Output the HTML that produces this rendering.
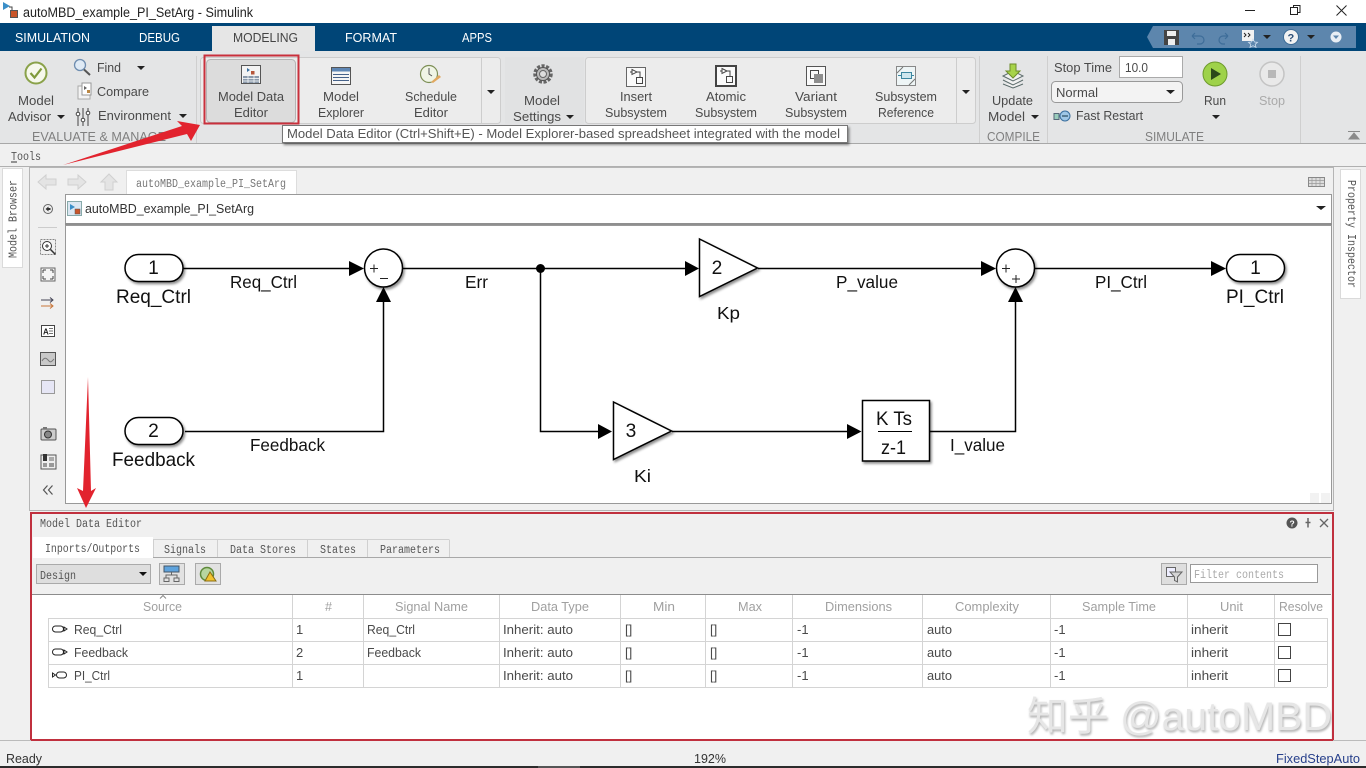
<!DOCTYPE html>
<html><head><meta charset="utf-8"><title>autoMBD_example_PI_SetArg - Simulink</title>
<style>
html,body{margin:0;padding:0;width:1366px;height:768px;overflow:hidden;background:#f0f0f0}
svg{display:block;position:absolute;left:0;top:0}
text{font-family:"Liberation Sans","Noto Sans CJK SC",sans-serif;font-size:13px;fill:#444;white-space:pre}
.m{font-family:"Liberation Mono",monospace;font-size:11.5px;fill:#555}
.r{fill:#4a4a4a;font-size:13px}
.g{fill:#7f7f7f;font-size:13px}
.t{fill:#fff;font-size:13px}
.h{fill:#a0a0a0;font-size:13px}
.c{fill:#4a4a4a;font-size:13px}
.d{fill:#111;font-size:17.300px}
.b{fill:#111;font-size:19.200px}
.ln{stroke:#000;stroke-width:1.5;fill:none}
.bk{fill:#fff;stroke:#000;stroke-width:1.5;filter:url(#s)}
.grid{stroke:#d4d4d4;stroke-width:1;fill:none}
</style></head><body>
<svg width="1366" height="768" viewBox="0 0 1366 768" xmlns="http://www.w3.org/2000/svg">
<defs><filter id="s" x="-20%" y="-20%" width="150%" height="150%"><feDropShadow dx="1.5" dy="2" stdDeviation="1.2" flood-color="#000" flood-opacity=".45"/></filter>
<filter id="w" x="-5%" y="-5%" width="110%" height="115%"><feDropShadow dx="1" dy="2" stdDeviation="1" flood-color="#aaa" flood-opacity=".9"/></filter></defs>

<!-- title bar -->
<rect width="1366" height="23" fill="#fff"/>
<path d="M3 2l7 4-7 4z" fill="#3a8fc8"/><path d="M9 7h3v3" fill="none" stroke="#444"/><rect x="10.500" y="10.500" width="7" height="7" fill="#c9552a" stroke="#555"/>
<text x="23" y="17" style="fill:#222;font-size:13.500px" textLength="230" lengthAdjust="spacingAndGlyphs">autoMBD_example_PI_SetArg - Simulink</text>
<path d="M1245 10.500h10" stroke="#222"/><path d="M1293.500 7.500V5.500h6.500v7h-2.500" fill="none" stroke="#222"/><rect x="1290.500" y="7.500" width="7" height="7" fill="none" stroke="#222"/>
<path d="M1336.500 5.500l10 10M1346.500 5.500l-10 10" stroke="#222"/>

<!-- blue tab strip -->
<rect y="23" width="1366" height="28" fill="#004577"/>
<rect x="212" y="26" width="103" height="25" fill="#e6e6e6"/>
<text x="15" y="42" class="t" textLength="75" lengthAdjust="spacingAndGlyphs">SIMULATION</text>
<text x="139" y="42" class="t" textLength="41" lengthAdjust="spacingAndGlyphs">DEBUG</text>
<text x="233" y="42" class="t" style="fill:#444" textLength="65" lengthAdjust="spacingAndGlyphs">MODELING</text>
<text x="345" y="42" class="t" textLength="52" lengthAdjust="spacingAndGlyphs">FORMAT</text>
<text x="462" y="42" class="t" textLength="30" lengthAdjust="spacingAndGlyphs">APPS</text>
<!-- quick access -->
<path d="M1153 26H1356V48H1153L1147 37z" fill="#5d86ad"/>
<rect x="1164" y="30" width="15" height="15" fill="#444"/><rect x="1167" y="31" width="9" height="5" fill="#eee"/><rect x="1168" y="39" width="7" height="6" fill="#eee"/>
<path d="M1192 36h8a4 4 0 0 1 0 8h-3M1192 36l3-3M1192 36l3 3" fill="none" stroke="#3e6d99" stroke-width="1.200"/>
<path d="M1228 36h-5a4 4 0 0 0 0 8h2M1228 36l-3-3M1228 36l-3 3" fill="none" stroke="#3e6d99" stroke-width="1.200"/>
<rect x="1242" y="30" width="12" height="11" fill="#f2f2f2"/><path d="M1244 33l2 2-2 2M1248 33l2 2-2 2" fill="none" stroke="#222"/><path d="M1253 39l1.500 3 3 .3-2.300 2 .8 3-3-1.600-3 1.600.8-3-2.300-2 3-.3z" fill="none" stroke="#cde" stroke-width=".8"/>
<path d="M1263 35h8l-4 4z" fill="#222"/>
<circle cx="1291" cy="37" r="7.500" fill="#f2f2f2" stroke="#3c6b96"/><text x="1287.500" y="41.500" style="font-size:11px;font-weight:bold;fill:#2c4f78">?</text>
<path d="M1307 35h8l-4 4z" fill="#222"/>
<circle cx="1336" cy="37" r="5.500" fill="#e8eef4"/><path d="M1333 35.500h6l-3 3.500z" fill="#5d86ad"/>

<!-- ribbon -->
<rect y="51" width="1366" height="92" fill="#e4e5e6"/>
<rect y="143" width="1366" height="1" fill="#a8a8a8"/>
<rect y="144" width="1366" height="22" fill="#f0f0f0"/>
<rect y="166" width="1366" height="1" fill="#b0b0b0"/>
<path d="M196.500 56V143M979.500 56V143M1047.500 56V143M1300.500 56V143" stroke="#cfcfcf"/>
<rect x="200.500" y="57.500" width="300" height="66" rx="3" fill="#ececec" stroke="#cdcdcd"/>
<path d="M481.500 58V123" stroke="#cdcdcd"/>
<rect x="505" y="57" width="79" height="67" fill="#e1e2e3"/>
<rect x="585.500" y="57.500" width="390" height="66" rx="3" fill="#ececec" stroke="#cdcdcd"/>
<path d="M956.500 58V123" stroke="#cdcdcd"/>
<rect x="206.500" y="59.500" width="89" height="63" rx="4" fill="#dcdcdc" stroke="#b5b5b5"/>

<!-- evaluate -->
<circle cx="36" cy="73" r="10.500" fill="#f6f8ec" stroke="#8aa24a" stroke-width="2"/><path d="M30.500 73l4 4.500 7-9" fill="none" stroke="#7f9a3a" stroke-width="2.200"/>
<text x="18" y="105" class="r" textLength="36" lengthAdjust="spacingAndGlyphs">Model</text><text x="8" y="121" class="r" textLength="43" lengthAdjust="spacingAndGlyphs">Advisor</text><path d="M57 115h8l-4 4z" fill="#222"/>
<circle cx="80" cy="65" r="5.500" fill="#dfeaf5" stroke="#6e8db0" stroke-width="1.300"/><path d="M84 69.500l6 5.500" stroke="#555" stroke-width="2"/>
<text x="97" y="72" class="r" textLength="24" lengthAdjust="spacingAndGlyphs">Find</text><path d="M137 66h8l-4 4z" fill="#222"/>
<rect x="78" y="86" width="12" height="13" fill="#f4f4f4" stroke="#aaa"/><rect x="82" y="83" width="9" height="12" fill="#fff" stroke="#999"/><path d="M84 86l3 2-3 2z" fill="#666"/><rect x="87" y="90" width="3" height="3" fill="#b84"/>
<text x="97" y="96" class="r" textLength="52" lengthAdjust="spacingAndGlyphs">Compare</text>
<path d="M78 108v18M83 108v18M88 108v18" stroke="#444"/><circle cx="78" cy="114" r="1.800" fill="#fff" stroke="#444"/><circle cx="83" cy="120" r="1.800" fill="#fff" stroke="#444"/><circle cx="88" cy="113" r="1.800" fill="#fff" stroke="#444"/>
<text x="98" y="120" class="r" textLength="73" lengthAdjust="spacingAndGlyphs">Environment</text><path d="M179 114h8l-4 4z" fill="#222"/>
<text x="32" y="141" class="g" textLength="134" lengthAdjust="spacingAndGlyphs">EVALUATE &amp; MANAGE</text>

<!-- model data etc -->
<rect x="241.500" y="65.500" width="19" height="18" fill="#f3f3f3" stroke="#555"/><rect x="243" y="76" width="16" height="7" fill="#8a99ab"/><path d="M243 78.500h16M243 81h16M248 76v7M254 76v7" stroke="#fff" stroke-width=".7"/><path d="M247 68l3 2-3 2z" fill="#3a70a0"/><rect x="251" y="71" width="3.500" height="3.500" fill="#b5553a"/>
<text x="218" y="101" class="r" textLength="66" lengthAdjust="spacingAndGlyphs">Model Data</text><text x="234" y="117" class="r" textLength="34" lengthAdjust="spacingAndGlyphs">Editor</text>
<rect x="331.500" y="67.500" width="19" height="17" fill="#f5f5f5" stroke="#555"/><rect x="332" y="68" width="18" height="3.500" fill="#5f87b5"/><path d="M333 74.500h16M333 77.500h16M333 80.500h16" stroke="#46628a"/>
<text x="323" y="101" class="r" textLength="36" lengthAdjust="spacingAndGlyphs">Model</text><text x="318" y="117" class="r" textLength="46" lengthAdjust="spacingAndGlyphs">Explorer</text>
<circle cx="429" cy="74" r="8.500" fill="#f0f5e6" stroke="#7d8f56" stroke-width="1.200"/><path d="M429 68v6l3 2" fill="none" stroke="#555"/><path d="M431 82l8-7 2 2-8 6z" fill="#e0a860"/>
<text x="405" y="101" class="r" textLength="52" lengthAdjust="spacingAndGlyphs">Schedule</text><text x="414" y="117" class="r" textLength="34" lengthAdjust="spacingAndGlyphs">Editor</text>
<path d="M487 90h8l-4 4z" fill="#222"/>
<circle cx="543" cy="74" r="8" fill="none" stroke="#666" stroke-width="3.500" stroke-dasharray="3 1.500"/><circle cx="543" cy="74" r="6.500" fill="#bbb" stroke="#555"/><circle cx="543" cy="74" r="3.500" fill="#ddd" stroke="#666"/>
<text x="524" y="105" class="r" textLength="36" lengthAdjust="spacingAndGlyphs">Model</text><text x="513" y="121" class="r" textLength="48" lengthAdjust="spacingAndGlyphs">Settings</text><path d="M566 115h8l-4 4z" fill="#222"/>

<!-- subsystems -->
<rect x="626.500" y="67.500" width="19" height="19" fill="#fafafa" stroke="#666"/><path d="M630 72h2M632 69.500l5 2.500-5 2.500zM637 72h3v5" fill="none" stroke="#444"/><rect x="636.500" y="77.500" width="6" height="6" fill="none" stroke="#444"/>
<rect x="716" y="66" width="20" height="20" fill="#fafafa" stroke="#444" stroke-width="2"/><path d="M720 71h2M722 68.500l5 2.500-5 2.500zM727 71h3v5" fill="none" stroke="#444"/><rect x="726.500" y="76.500" width="6" height="6" fill="none" stroke="#444"/>
<rect x="806.500" y="66.500" width="19" height="19" fill="#fafafa" stroke="#555"/><rect x="810.500" y="70.500" width="8" height="8" fill="none" stroke="#444"/><rect x="814" y="74" width="9" height="9" fill="#8e8e8e"/>
<rect x="896.500" y="66.500" width="19" height="19" fill="#eef5f6" stroke="#888"/><path d="M897 73l6-6M909 85l6-6" stroke="#777"/><rect x="901.500" y="72.500" width="10" height="6" fill="#cfe7ee" stroke="#3d87a0"/><path d="M898 75.500h3M911 75.500h3" stroke="#3d87a0"/>
<text x="620" y="101" class="r" textLength="32" lengthAdjust="spacingAndGlyphs">Insert</text><text x="605" y="117" class="r" textLength="62" lengthAdjust="spacingAndGlyphs">Subsystem</text>
<text x="706" y="101" class="r" textLength="40" lengthAdjust="spacingAndGlyphs">Atomic</text><text x="695" y="117" class="r" textLength="62" lengthAdjust="spacingAndGlyphs">Subsystem</text>
<text x="795" y="101" class="r" textLength="42" lengthAdjust="spacingAndGlyphs">Variant</text><text x="785" y="117" class="r" textLength="62" lengthAdjust="spacingAndGlyphs">Subsystem</text>
<text x="875" y="101" class="r" textLength="62" lengthAdjust="spacingAndGlyphs">Subsystem</text><text x="878" y="117" class="r" textLength="56" lengthAdjust="spacingAndGlyphs">Reference</text>
<path d="M962 90h8l-4 4z" fill="#222"/>

<!-- compile -->
<path d="M1003 76l10 5 10-5-10-5zM1003 80l10 5 10-5M1003 84l10 4 10-4" fill="#f1f1f1" stroke="#5a6a6a"/><path d="M1010 64h6v7h4l-7 7-7-7h4z" fill="#a7d34a" stroke="#6d8c2b"/>
<text x="992" y="105" class="r" textLength="41" lengthAdjust="spacingAndGlyphs">Update</text><text x="988" y="121" class="r" textLength="37" lengthAdjust="spacingAndGlyphs">Model</text><path d="M1031 115h8l-4 4z" fill="#222"/>
<text x="987" y="141" class="g" textLength="53" lengthAdjust="spacingAndGlyphs">COMPILE</text>

<!-- simulate -->
<text x="1054" y="72" class="r" textLength="58" lengthAdjust="spacingAndGlyphs">Stop Time</text>
<rect x="1119.500" y="56.500" width="63" height="21" fill="#fff" stroke="#aaa"/><text x="1125" y="72" class="r" textLength="23" lengthAdjust="spacingAndGlyphs">10.0</text>
<rect x="1051.500" y="81.500" width="131" height="21" rx="4" fill="#f3f3f3" stroke="#999"/><text x="1056" y="97" class="r" textLength="42" lengthAdjust="spacingAndGlyphs">Normal</text><path d="M1166 90h9l-4.500 4z" fill="#222"/>
<rect x="1054" y="113.500" width="5" height="6" fill="#9cb" stroke="#567"/><circle cx="1065" cy="116" r="5" fill="#9fc7e6" stroke="#3a6f9e"/><path d="M1062 116h6" stroke="#134"/>
<text x="1076" y="120" class="r" textLength="67" lengthAdjust="spacingAndGlyphs">Fast Restart</text>
<circle cx="1215" cy="74" r="12" fill="#9ed24a" stroke="#6d9a2c"/><path d="M1211 68l10 6-10 6z" fill="#2b4a1a"/>
<text x="1204" y="105" class="r" textLength="22" lengthAdjust="spacingAndGlyphs">Run</text><path d="M1212 115h8l-4 4z" fill="#222"/>
<circle cx="1272" cy="74" r="12" fill="#e9e9e9" stroke="#c4c4c4" stroke-width="1.500"/><rect x="1268" y="70" width="8" height="8" fill="#b8b8b8"/>
<text x="1259" y="105" class="r" style="fill:#aaa" textLength="26" lengthAdjust="spacingAndGlyphs">Stop</text>
<text x="1145" y="141" class="g" textLength="59" lengthAdjust="spacingAndGlyphs">SIMULATE</text>
<path d="M1348 131.500h12M1349 139h10l-5-6z" fill="#8a8a8a" stroke="#8a8a8a"/>

<!-- tools row -->
<text x="11" y="160" class="m" textLength="30" lengthAdjust="spacingAndGlyphs">Tools</text><path d="M11 162h6" stroke="#333"/>

<!-- tool tip -->
<rect x="282.500" y="125.500" width="565" height="17" fill="#fff" stroke="#777" filter="url(#s)"/>
<text x="287" y="138" style="font-size:12.500px;fill:#555" textLength="553" lengthAdjust="spacingAndGlyphs">Model Data Editor (Ctrl+Shift+E) - Model Explorer-based spreadsheet integrated with the model</text>
<rect x="204.500" y="55.500" width="94" height="68" fill="none" stroke="#c9303c" stroke-width="2"/>

<!-- editor frame -->
<rect x="29.500" y="167.500" width="1304" height="343" fill="#f0f0f0" stroke="#b5b5b5"/>
<rect x="2.500" y="168.500" width="20" height="99" fill="#fff" stroke="#dadada"/>
<text class="m" transform="translate(16.500,258) rotate(-90)" textLength="78" lengthAdjust="spacingAndGlyphs">Model Browser</text>
<rect x="1340.500" y="169.500" width="20" height="129" fill="#fff" stroke="#dadada"/>
<text class="m" transform="translate(1348,180) rotate(90)" textLength="108" lengthAdjust="spacingAndGlyphs">Property Inspector</text>
<!-- nav -->
<path d="M38 182l8-7v4h10v6H46v4z" fill="#e4e4e4" stroke="#d0d0d0"/><path d="M86 182l-8-7v4H68v6h10v4z" fill="#e4e4e4" stroke="#d0d0d0"/><path d="M109 174l8 8h-4v8h-8v-8h-4z" fill="#e4e4e4" stroke="#d0d0d0"/>
<rect x="126.500" y="170.500" width="170" height="24" fill="#fff" stroke="#ddd"/>
<text x="136" y="187" class="m" style="fill:#777" textLength="150" lengthAdjust="spacingAndGlyphs">autoMBD_example_PI_SetArg</text>
<rect x="1308.500" y="177.500" width="16" height="9" fill="#ddd" stroke="#888"/><path d="M1309 180.500h15M1309 183.500h15M1312 178v8M1316 178v8M1320 178v8" stroke="#999" stroke-width=".7"/>
<!-- path bar -->
<rect x="65.500" y="194.500" width="1266" height="29" fill="#fff" stroke="#999"/>
<rect x="65" y="223" width="1267" height="2" fill="#8f8f8f"/>
<rect x="67.500" y="201.500" width="14" height="14" fill="#dbe7f2" stroke="#8aa"/><path d="M70 204l5 3-5 3z" fill="#3a8fc8"/><rect x="75" y="209" width="5" height="5" fill="#c9552a" stroke="#555" stroke-width=".5"/>
<text x="85" y="213" style="font-size:13px;fill:#333" textLength="169" lengthAdjust="spacingAndGlyphs">autoMBD_example_PI_SetArg</text>
<path d="M1316 206h10l-5 4z" fill="#222"/>
<!-- canvas -->
<rect x="65.500" y="225.500" width="1266" height="278" fill="#fff" stroke="#999"/>
<rect x="1310" y="493" width="9" height="10" fill="#f2f2f2"/><rect x="1321" y="493" width="9" height="10" fill="#f2f2f2"/>

<!-- palette -->
<circle cx="48" cy="209" r="4.500" fill="#eee" stroke="#666"/><path d="M45.500 209l3-2.500v1.500h2v2h-2v1.500z" fill="#333"/>
<path d="M38 227.500h19" stroke="#ccc"/>
<rect x="40.500" y="239.500" width="15" height="15" fill="none" stroke="#888" stroke-dasharray="2 1"/><circle cx="47" cy="246" r="4.500" fill="#fff" stroke="#333"/><path d="M45 246h4M47 244v4" stroke="#333"/><path d="M50.500 249.500l5 5" stroke="#333" stroke-width="1.500"/>
<rect x="41" y="268" width="14" height="13" fill="#f4f4f4" stroke="#666"/><path d="M43 270h3M43 270v3M53 270h-3M53 270v3M43 279h3M43 279v-3M53 279h-3M53 279v-3" stroke="#444"/>
<path d="M41 300h12M50 297.500l3 2.500-3 2.500" fill="none" stroke="#445"/><path d="M41 306h12M50 303.500l3 2.500-3 2.500" fill="none" stroke="#c8763a"/>
<rect x="41.500" y="325.500" width="13" height="11" fill="#fff" stroke="#444"/><text x="43" y="334.500" style="font-size:8px;font-weight:bold;fill:#222">A</text><path d="M49 328.500h4M49 331h4M49 333.500h4" stroke="#444" stroke-width=".7"/>
<rect x="40.500" y="352.500" width="15" height="13" fill="#c9c9c9" stroke="#555"/><path d="M42 361c3-5 5-2 7 0s3 0 5-2" fill="none" stroke="#777"/>
<rect x="41.500" y="380.500" width="13" height="13" fill="#e6e6f5" stroke="#999"/>
<rect x="41" y="429" width="15" height="11" rx="1" fill="#ccc" stroke="#555"/><circle cx="48" cy="434.500" r="3.500" fill="#888" stroke="#333"/><rect x="43" y="427" width="4" height="2" fill="#777"/>
<rect x="41" y="455" width="15" height="14" fill="#eee" stroke="#555"/><rect x="43" y="454" width="4" height="7" fill="#333"/><rect x="49" y="457" width="5" height="4" fill="#aaa"/><rect x="43" y="463" width="4" height="4" fill="#999"/><rect x="49" y="463" width="5" height="4" fill="#999"/>
<path d="M47.500 485.500l-4 4.500 4 4.500M52.500 485.500l-4 4.500 4 4.500" fill="none" stroke="#555" stroke-width="1.200"/>

<!-- diagram -->
<path class="ln" d="M183 268.500H350M402 268.500H686M540.500 268.500V431.500H599M758 268.500H982M1034 268.500H1212M672 431.500H848M930 431.500H1015.500V302M185 431.500H383.500V302"/>
<rect class="bk" x="125" y="254.500" width="58" height="27" rx="13.500"/>
<rect class="bk" x="125" y="417.500" width="58" height="27" rx="13.500"/>
<rect class="bk" x="1226.500" y="254.500" width="58" height="27" rx="13.500"/>
<circle class="bk" cx="383.500" cy="268" r="19"/>
<circle class="bk" cx="1015.500" cy="268" r="19"/>
<path class="bk" d="M699.500 239L757.500 268L699.500 296.500z"/>
<path class="bk" d="M613.500 402L671.500 431L613.500 459.500z"/>
<rect class="bk" x="862.500" y="400.500" width="67" height="60.500"/>
<path d="M349 261l15 7.500-15 7.500zM685 261l14 7.500-14 7.500zM598 424l14 7.500-14 7.500zM847 424l14.500 7.500-14.500 7.500zM981 261l15 7.500-15 7.500zM1211 261l15 7.500-15 7.500zM376 302l7.500-15 7.500 15zM1008 302l7.500-15 7.500 15z" fill="#000"/>
<circle cx="540.500" cy="268.500" r="4.500" fill="#000"/>
<path d="M370 268.500h8M374 264.500v8M380 278.500h8M1002 268.500h8M1006 264.500v8M1012 279h8M1016 275v8" stroke="#222" fill="none"/>
<path d="M878 431.500h34" stroke="#000"/>
<text x="153.500" y="274" class="b" text-anchor="middle">1</text><text x="153.500" y="437" class="b" text-anchor="middle">2</text><text x="1255.500" y="274" class="b" text-anchor="middle">1</text>
<text x="717" y="274" class="b" text-anchor="middle">2</text><text x="631" y="437" class="b" text-anchor="middle">3</text>
<text x="876" y="425" class="b" textLength="36" lengthAdjust="spacingAndGlyphs">K Ts</text><text x="881" y="454" class="b" textLength="25" lengthAdjust="spacingAndGlyphs">z-1</text>
<text x="116" y="303" class="b" textLength="75" lengthAdjust="spacingAndGlyphs">Req_Ctrl</text><text x="112" y="466" class="b" textLength="83" lengthAdjust="spacingAndGlyphs">Feedback</text>
<text x="1226" y="303" class="b" textLength="58" lengthAdjust="spacingAndGlyphs">PI_Ctrl</text>
<text x="230" y="288" class="d" textLength="67" lengthAdjust="spacingAndGlyphs">Req_Ctrl</text><text x="250" y="451" class="d" textLength="75" lengthAdjust="spacingAndGlyphs">Feedback</text>
<text x="465" y="288" class="d" textLength="23" lengthAdjust="spacingAndGlyphs">Err</text><text x="717" y="319" class="d" textLength="23" lengthAdjust="spacingAndGlyphs">Kp</text><text x="634" y="482" class="d" textLength="17" lengthAdjust="spacingAndGlyphs">Ki</text>
<text x="836" y="288" class="d" textLength="62" lengthAdjust="spacingAndGlyphs">P_value</text><text x="1095" y="288" class="d" textLength="52" lengthAdjust="spacingAndGlyphs">PI_Ctrl</text><text x="950" y="451" class="d" textLength="55" lengthAdjust="spacingAndGlyphs">I_value</text>

<!-- bottom panel -->
<rect x="30" y="512" width="1303" height="229" fill="#f0f0f0"/>
<rect x="32" y="595" width="1299" height="144" fill="#fff"/>
<path d="M32 594.500H1331" stroke="#8c8c8c"/>
<text x="40" y="527" class="m" textLength="102" lengthAdjust="spacingAndGlyphs">Model Data Editor</text>
<circle cx="1292" cy="523" r="5.500" fill="#555"/><text x="1289.500" y="526.500" style="font-size:8.500px;font-weight:bold;fill:#fff">?</text>
<path d="M1308 518v4M1305.500 522.500h5M1308 522.500v5" stroke="#666" stroke-width="1.500"/>
<path d="M1320 519l8 8M1328 519l-8 8" stroke="#666" stroke-width="1.300"/>
<path d="M33 557.500H1331" stroke="#a8a8a8"/>
<rect x="33" y="537" width="120" height="21" fill="#fff"/>
<path d="M153.500 539V557M217.500 540V557M307.500 540V557M367.500 540V557M449.500 540V557M154 539.500H449.500" stroke="#d0d0d0"/>
<text x="45" y="552" class="m" textLength="95" lengthAdjust="spacingAndGlyphs">Inports/Outports</text>
<text x="164" y="553" class="m" textLength="42" lengthAdjust="spacingAndGlyphs">Signals</text><text x="230" y="553" class="m" textLength="66" lengthAdjust="spacingAndGlyphs">Data Stores</text><text x="320" y="553" class="m" textLength="36" lengthAdjust="spacingAndGlyphs">States</text><text x="380" y="553" class="m" textLength="60" lengthAdjust="spacingAndGlyphs">Parameters</text>
<rect x="36.500" y="564.500" width="114" height="19" fill="#dedede" stroke="#aaa"/><text x="40" y="579" class="m" textLength="36" lengthAdjust="spacingAndGlyphs">Design</text><path d="M139 572h8l-4 4z" fill="#111"/>
<rect x="159.500" y="563.500" width="25" height="21" fill="#e2e2e2" stroke="#aaa"/><rect x="164" y="566" width="15" height="6" fill="#5ea3dd" stroke="#456"/><path d="M171.500 572v3M166 578v-3h11v3" fill="none" stroke="#666"/><rect x="164" y="578" width="5" height="3.500" fill="none" stroke="#666"/><rect x="174" y="578" width="5" height="3.500" fill="none" stroke="#666"/>
<rect x="195.500" y="563.500" width="25" height="21" fill="#e2e2e2" stroke="#aaa"/><circle cx="207" cy="574" r="6.500" fill="#b7d6a0" stroke="#5e8a3a" stroke-width="1.500"/><path d="M205 581l5-9 6 9z" fill="#f2c32e" stroke="#8a6d12"/>
<rect x="1161.500" y="563.500" width="25" height="21" fill="#dedede" stroke="#aaa"/><rect x="1166.500" y="567.500" width="9" height="9" fill="#eef" stroke="#666"/><path d="M1170 572h12l-4.500 5v5l-3-1.500v-3.500z" fill="#d5d5d5" stroke="#666"/>
<rect x="1190.500" y="564.500" width="127" height="18" fill="#fff" stroke="#999"/><text x="1194" y="578" class="m" style="fill:#aaa" textLength="90" lengthAdjust="spacingAndGlyphs">Filter contents</text>

<!-- table -->
<path class="grid" d="M292.500 595V687M363.500 595V687M499.500 595V687M620.500 595V687M705.500 595V687M792.500 595V687M922.500 595V687M1050.500 595V687M1187.500 595V687M1274.500 595V687M1327.500 618V687M48.500 618V687M48 618.500H1327M48 641.500H1327M48 664.500H1327M48 687.500H1327"/>
<path d="M160 598.500l3-3 3 3" fill="none" stroke="#888"/>
<text x="143" y="611" class="h" textLength="39" lengthAdjust="spacingAndGlyphs">Source</text><text x="325" y="611" class="h" textLength="7" lengthAdjust="spacingAndGlyphs">#</text><text x="395" y="611" class="h" textLength="73" lengthAdjust="spacingAndGlyphs">Signal Name</text><text x="531" y="611" class="h" textLength="58" lengthAdjust="spacingAndGlyphs">Data Type</text><text x="653" y="611" class="h" textLength="22" lengthAdjust="spacingAndGlyphs">Min</text><text x="738" y="611" class="h" textLength="24" lengthAdjust="spacingAndGlyphs">Max</text><text x="825" y="611" class="h" textLength="67" lengthAdjust="spacingAndGlyphs">Dimensions</text><text x="955" y="611" class="h" textLength="64" lengthAdjust="spacingAndGlyphs">Complexity</text><text x="1082" y="611" class="h" textLength="74" lengthAdjust="spacingAndGlyphs">Sample Time</text><text x="1220" y="611" class="h" textLength="23" lengthAdjust="spacingAndGlyphs">Unit</text><text x="1279" y="611" class="h" textLength="44" lengthAdjust="spacingAndGlyphs">Resolve</text>

<rect x="52.500" y="626" width="11" height="6" rx="3" fill="#fff" stroke="#222"/><path d="M64 627l3 2-3 2z" fill="none" stroke="#222"/>
<rect x="52.500" y="649" width="11" height="6" rx="3" fill="#fff" stroke="#222"/><path d="M64 650l3 2-3 2z" fill="none" stroke="#222"/>
<rect x="56.500" y="672" width="10" height="6" rx="3" fill="#fff" stroke="#222"/><path d="M52.500 673l3 2-3 2z" fill="none" stroke="#222"/>

<text x="74" y="634" class="c" textLength="48" lengthAdjust="spacingAndGlyphs">Req_Ctrl</text><text x="296" y="634" class="c">1</text><text x="367" y="634" class="c" textLength="48" lengthAdjust="spacingAndGlyphs">Req_Ctrl</text>
<text x="74" y="657" class="c" textLength="54" lengthAdjust="spacingAndGlyphs">Feedback</text><text x="296" y="657" class="c">2</text><text x="367" y="657" class="c" textLength="54" lengthAdjust="spacingAndGlyphs">Feedback</text>
<text x="74" y="680" class="c" textLength="36" lengthAdjust="spacingAndGlyphs">PI_Ctrl</text><text x="296" y="680" class="c">1</text>

<text x="503" y="634" class="c" textLength="70" lengthAdjust="spacingAndGlyphs">Inherit: auto</text><text x="503" y="657" class="c" textLength="70" lengthAdjust="spacingAndGlyphs">Inherit: auto</text><text x="503" y="680" class="c" textLength="70" lengthAdjust="spacingAndGlyphs">Inherit: auto</text>
<text x="625" y="634" class="c">[]</text><text x="625" y="657" class="c">[]</text><text x="625" y="680" class="c">[]</text>
<text x="710" y="634" class="c">[]</text><text x="710" y="657" class="c">[]</text><text x="710" y="680" class="c">[]</text>
<text x="797" y="634" class="c">-1</text><text x="797" y="657" class="c">-1</text><text x="797" y="680" class="c">-1</text>
<text x="927" y="634" class="c" textLength="25" lengthAdjust="spacingAndGlyphs">auto</text><text x="927" y="657" class="c" textLength="25" lengthAdjust="spacingAndGlyphs">auto</text><text x="927" y="680" class="c" textLength="25" lengthAdjust="spacingAndGlyphs">auto</text>
<text x="1054" y="634" class="c">-1</text><text x="1054" y="657" class="c">-1</text><text x="1054" y="680" class="c">-1</text>
<text x="1191" y="634" class="c" textLength="37" lengthAdjust="spacingAndGlyphs">inherit</text><text x="1191" y="657" class="c" textLength="37" lengthAdjust="spacingAndGlyphs">inherit</text><text x="1191" y="680" class="c" textLength="37" lengthAdjust="spacingAndGlyphs">inherit</text>
<rect x="1278.500" y="623.500" width="12" height="12" fill="#fff" stroke="#444"/><rect x="1278.500" y="646.500" width="12" height="12" fill="#fff" stroke="#444"/><rect x="1278.500" y="669.500" width="12" height="12" fill="#fff" stroke="#444"/>

<!-- watermark -->
<text x="1027" y="730" filter="url(#w)" style="font-size:40px;fill:#e6e6e6" textLength="305" lengthAdjust="spacingAndGlyphs">知乎 @autoMBD</text>

<rect x="31" y="513" width="1302" height="227" fill="none" stroke="#c0303e" stroke-width="2"/>

<!-- status bar -->
<path d="M0 740.500H1366" stroke="#bbb"/>
<rect y="741" width="1366" height="25" fill="#f0f0f0"/>
<rect x="31" y="739" width="1302" height="2" fill="#c0303e"/>
<text x="6" y="763" style="font-size:13px;fill:#333" textLength="36" lengthAdjust="spacingAndGlyphs">Ready</text>
<text x="694" y="763" style="font-size:13px;fill:#333" textLength="32" lengthAdjust="spacingAndGlyphs">192%</text>
<text x="1276" y="763" style="font-size:13px;fill:#27408b" textLength="84" lengthAdjust="spacingAndGlyphs">FixedStepAuto</text>
<rect y="766" width="1366" height="2" fill="#2c2c2c"/>
<rect x="538" y="766" width="42" height="2" fill="#555"/>

<!-- red arrows -->
<path d="M63 165L182 126 177 121 200 125 191 141 187 134z" fill="#e2232e"/>
<path d="M88 377L91 491 96 488 86 508 77 488 83 491z" fill="#e2232e"/>
</svg>
</body></html>
